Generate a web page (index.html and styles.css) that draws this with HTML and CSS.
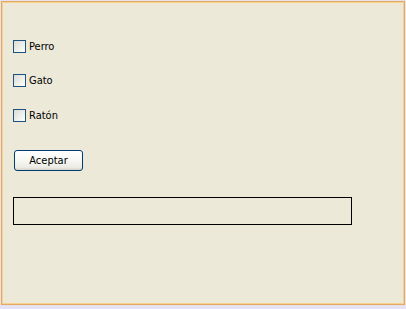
FILE: index.html
```html
<!DOCTYPE html>
<html>
<head>
<meta charset="utf-8">
<link rel="stylesheet" href="styles.css">
</head>
<body>
<div class="frame">
  <label class="check"><span class="box"></span><span class="lbl">Perro</span></label>
  <label class="check row2"><span class="box"></span><span class="lbl">Gato</span></label>
  <label class="check row3"><span class="box"></span><span class="lbl">Ratón</span></label>
  <button class="btn">Aceptar</button>
  <div class="field"></div>
</div>
</body>
</html>
```
FILE: styles.css
```css
html, body {
  margin: 0;
  padding: 0;
  background: #e4e2f3;
  width: 406px;
  height: 309px;
  overflow: hidden;
}
body {
  padding: 1px;
  box-sizing: border-box;
  font-family: "DejaVu Sans Condensed", "Liberation Sans", sans-serif;
  font-size: 11px;
  color: #000;
}
.frame {
  width: 404px;
  height: 304px;
  box-sizing: border-box;
  border: 1px solid #e7a95e;
  box-shadow: inset 0 0 0 1px #f7d28f;
  background: #ece9d8;
  padding: 38px 0 0 11px;
  display: flex;
  flex-direction: column;
  align-items: flex-start;
}
.check {
  display: flex;
  align-items: center;
  height: 13px;
  line-height: 13px;
}
.row2 { margin-top: 21px; }
.row3 { margin-top: 22px; }
.box {
  width: 13px;
  height: 13px;
  box-sizing: border-box;
  border: 1px solid #1c5180;
  background: linear-gradient(135deg, #dcdcd5 0%, #f0f0ec 60%, #ffffff 100%);
}
.lbl {
  margin-left: 3px;
}
.btn {
  margin: 28px 0 0 1px;
  width: 69px;
  height: 21px;
  box-sizing: border-box;
  border: 1px solid #003c74;
  border-radius: 3px;
  background: linear-gradient(180deg, #ffffff 0%, #f7f7f3 50%, #ecebe5 85%, #d8d4c8 100%);
  font-family: inherit;
  font-size: 11px;
  color: #000;
  padding: 0;
  text-align: center;
  line-height: 19px;
}
.field {
  margin-top: 26px;
  width: 339px;
  height: 28px;
  box-sizing: border-box;
  border: 1px solid #000;
  background: #ece9d8;
}
```
